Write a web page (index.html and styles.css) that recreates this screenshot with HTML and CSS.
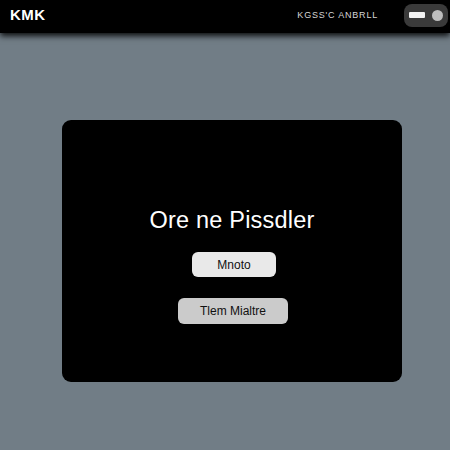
FILE: index.html
```html
<!DOCTYPE html>
<html lang="en">
<head>
    <meta charset="UTF-8">
    <meta name="viewport" content="width=device-width, initial-scale=1.0">
    <title>KMK</title>
    <link rel="stylesheet" href="styles.css">
</head>
<body>

    <header class="topbar">
        <span class="brand">KMK</span>
        <div class="topbar-right">
            <span class="status">KGSS'C ANBRLL</span>
            <div class="toggle">
                <span class="toggle-bar"></span>
                <span class="toggle-knob"></span>
            </div>
        </div>
    </header>

    <main class="stage">
        <section class="panel">
            <h1>Ore ne Pissdler</h1>
            <button class="btn btn-light">Mnoto</button>
            <button class="btn btn-grey">Tlem Mialtre</button>
        </section>
    </main>

</body>
</html>
```

FILE: styles.css
```css
:root {
    --bg: #717d86;
    --panel: #000000;
    --bar: #000000;
    --btn-light: #e9e9e9;
    --btn-grey: #cbcbcb;
    --font-family: "Liberation Sans", Arial, sans-serif;
}
html, body {
    margin: 0;
    height: 100%;
}
body {
    font-family: var(--font-family);
    background-color: var(--bg);
    display: flex;
    flex-direction: column;
}
.topbar {
    height: 33px;
    background: var(--bar);
    display: flex;
    align-items: center;
    justify-content: space-between;
    padding: 0 2px 0 10px;
    box-shadow: 0 3px 6px rgba(0,0,0,0.9);
    position: relative;
}
.brand {
    color: #fff;
    font-weight: bold;
    font-size: 15px;
    letter-spacing: 0.5px;
    margin-top: -4px;
}
.topbar-right {
    display: flex;
    align-items: center;
    gap: 26px;
    margin-top: -3px;
}
.status {
    color: #d6d6d6;
    font-size: 9px;
    letter-spacing: 0.8px;
}
.toggle {
    width: 44px;
    height: 23px;
    border-radius: 8px;
    background: #3a3a3a;
    display: flex;
    align-items: center;
    justify-content: space-between;
    padding: 0 5px;
    box-sizing: border-box;
}
.toggle-bar {
    width: 16px;
    height: 6px;
    background: #f2f2f2;
    border-radius: 1px;
}
.toggle-knob {
    width: 11px;
    height: 11px;
    border-radius: 50%;
    background: #bdbdbd;
}
.stage {
    flex: 1;
    display: flex;
    justify-content: center;
    padding: 87px 0 0 14px;
}
.panel {
    width: 340px;
    height: 262px;
    background: var(--panel);
    border-radius: 9px;
    display: flex;
    flex-direction: column;
    align-items: center;
    box-sizing: border-box;
    padding-top: 87px;
}
.panel h1 {
    color: #fff;
    font-weight: normal;
    font-size: 23.5px;
    margin: 0 0 18px 0;
    letter-spacing: 0.2px;
}
.btn {
    font-family: var(--font-family);
    font-size: 12px;
    color: #111;
    border: none;
    border-radius: 6px;
    height: 25px;
    cursor: pointer;
}
.btn-light {
    background: var(--btn-light);
    width: 84px;
    margin-left: 4px;
}
.btn-grey {
    background: var(--btn-grey);
    width: 110px;
    height: 26px;
    margin-top: 21px;
    margin-left: 2px;
}
```
